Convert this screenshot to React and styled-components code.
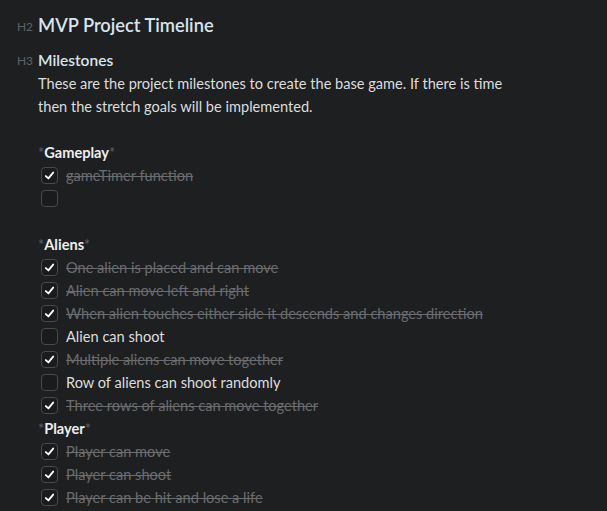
import React from "react";
import styled, { createGlobalStyle } from "styled-components";

const GlobalStyle = createGlobalStyle`
  html, body {
    margin: 0;
    padding: 0;
    background: #1e1f21;
  }
  body {
    font-family: "Lato", "Noto Sans", sans-serif;
    color: #dcddde;
    -webkit-font-smoothing: antialiased;
  }
`;

const Page = styled.div`
  width: 607px;
  height: 511px;
  overflow: hidden;
  box-sizing: border-box;
  padding: 12px 0 0 38px;
`;

const Heading = styled.div`
  position: relative;
  font-weight: 600;
  color: #d7e4ee;
  font-size: ${({ $level }) => ($level === 2 ? "18.3px" : "15.5px")};
  line-height: ${({ $level }) => ($level === 2 ? "26px" : "22px")};
  margin-bottom: ${({ $level }) => ($level === 2 ? "11px" : "1px")};
`;

const LevelTag = styled.span`
  position: absolute;
  right: 100%;
  margin-right: 5px;
  bottom: ${({ $level }) => ($level === 2 ? "5px" : "4px")};
  font-size: 12px;
  font-weight: 400;
  color: #5f6265;
  line-height: 1;
  white-space: nowrap;
`;

const Paragraph = styled.p`
  margin: 0;
  width: 480px;
  font-size: 14.6px;
  line-height: 23px;
  color: #dcddde;
`;

const Blank = styled.div`
  height: 23px;
`;

const Group = styled.div`
  font-size: 14.6px;
  line-height: 23px;
`;

const Star = styled.span`
  color: #5f6265;
  font-weight: 400;
`;

const GroupTitle = styled.div`
  font-weight: 700;
  color: #eeeeee;
`;

const Task = styled.div`
  display: flex;
  align-items: center;
  height: 23px;
  padding-left: 3px;
  gap: 8px;
`;

const Box = styled.span`
  flex: none;
  width: 15px;
  height: 15px;
  border: 1px solid #47494c;
  border-radius: 4px;
  background: #1a1b1d;
  display: flex;
  align-items: center;
  justify-content: center;
`;

const Label = styled.span`
  color: ${({ $done }) => ($done ? "#6a6c6f" : "#dcddde")};
  text-decoration: ${({ $done }) => ($done ? "line-through" : "none")};
  text-decoration-color: #6a6c6f;
  white-space: nowrap;
`;

const Check = () => (
  <svg width="11" height="11" viewBox="0 0 12 12">
    <path
      d="M2 6.6 L4.8 9.2 L10 2.8"
      fill="none"
      stroke="#ffffff"
      strokeWidth="2"
      strokeLinecap="round"
      strokeLinejoin="round"
    />
  </svg>
);

const TaskItem = ({ done, children }) => (
  <Task>
    <Box>{done && <Check />}</Box>
    <Label $done={done}>{children}</Label>
  </Task>
);

const groups = [
  {
    title: "Gameplay",
    items: [
      { text: "gameTimer function", done: true },
      { text: "", done: false },
    ],
    gapAfter: true,
  },
  {
    title: "Aliens",
    items: [
      { text: "One alien is placed and can move", done: true },
      { text: "Alien can move left and right", done: true },
      { text: "When alien touches either side it descends and changes direction", done: true },
      { text: "Alien can shoot", done: false },
      { text: "Multiple aliens can move together", done: true },
      { text: "Row of aliens can shoot randomly", done: false },
      { text: "Three rows of aliens can move together", done: true },
    ],
  },
  {
    title: "Player",
    items: [
      { text: "Player can move", done: true },
      { text: "Player can shoot", done: true },
      { text: "Player can be hit and lose a life", done: true },
    ],
  },
];

const App = () => (
  <>
    <GlobalStyle />
    <Page>
      <Heading $level={2}>
        <LevelTag $level={2}>H2</LevelTag>
        MVP Project Timeline
      </Heading>
      <Heading $level={3}>
        <LevelTag $level={3}>H3</LevelTag>
        Milestones
      </Heading>
      <Paragraph>
        These are the project milestones to create the base game. If there is time
        then the stretch goals will be implemented.
      </Paragraph>
      <Blank />
      {groups.map((g) => (
        <Group key={g.title}>
          <GroupTitle>
            <Star>*</Star>
            {g.title}
            <Star>*</Star>
          </GroupTitle>
          {g.items.map((it, i) => (
            <TaskItem key={i} done={it.done}>
              {it.text}
            </TaskItem>
          ))}
          {g.gapAfter && <Blank />}
        </Group>
      ))}
    </Page>
  </>
);

export default App;
